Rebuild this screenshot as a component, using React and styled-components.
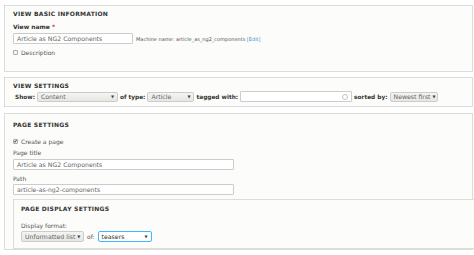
import React from 'react';
import styled, { createGlobalStyle } from 'styled-components';

const GlobalStyle = createGlobalStyle`
  html, body {
    margin: 0;
    padding: 0;
    background: #fff;
    overflow: hidden;
  }
  body {
    font-family: "DejaVu Sans", Verdana, sans-serif;
    color: #333;
    font-size: 6px;
  }
`;

const Page = styled.div`
  width: 474px;
  height: 255px;
  padding: 5px 1px 0 4px;
  box-sizing: border-box;
  overflow: hidden;
`;

const Fieldset = styled.div`
  border: 1px solid #dcdcd8;
  background: #fcfcfa;
  padding: ${(p) => p.$pad || '4px 8px 4px 8px'};
  margin-bottom: ${(p) => p.$gap || 0}px;
  margin-top: ${(p) => p.$top || 0}px;
  margin-right: ${(p) => p.$overflow || 0}px;
  box-sizing: border-box;
`;

const Legend = styled.div`
  font-weight: bold;
  font-size: 6px;
  line-height: 8px;
  letter-spacing: 0.25px;
  text-transform: uppercase;
  color: #333;
`;

const Label = styled.div`
  font-size: 6px;
  line-height: 8px;
  margin-top: ${(p) => p.$top || 0}px;
  font-weight: ${(p) => (p.$bold ? 'bold' : 'normal')};
  color: ${(p) => (p.$bold ? '#333' : '#555')};
  span {
    color: #e0262a;
  }
`;

const Row = styled.div`
  display: flex;
  align-items: center;
  gap: ${(p) => p.$gap || 3}px;
  margin-top: ${(p) => p.$top || 0}px;
  padding-left: ${(p) => p.$indent || 0}px;
`;

const TextInput = styled.div`
  width: ${(p) => p.$w}px;
  height: 11px;
  box-sizing: border-box;
  border: 1px solid #ccc;
  border-radius: 1px;
  background: #fff;
  font-size: 6.2px;
  line-height: 9px;
  padding: 0 3px;
  color: #666;
  margin-top: ${(p) => p.$top || 0}px;
  display: flex;
  align-items: center;
  justify-content: space-between;
  white-space: nowrap;
  flex-shrink: 0;
`;

const Throbber = styled.span`
  width: 4px;
  height: 4px;
  border: 1px solid #c4c4c4;
  border-radius: 50%;
`;

const Select = styled.div`
  width: ${(p) => p.$w}px;
  height: ${(p) => p.$h || 10}px;
  box-sizing: border-box;
  border: 1px solid ${(p) => (p.$focus ? '#40b6ff' : '#ccc')};
  border-radius: 2px;
  background: ${(p) => (p.$focus ? '#fff' : 'linear-gradient(#f4f4f2, #e6e6e3)')};
  color: ${(p) => (p.$focus ? '#333' : '#666')};
  font-size: 6.2px;
  line-height: 8px;
  padding: 0 3px 0 3px;
  display: flex;
  align-items: center;
  justify-content: space-between;
  white-space: nowrap;
  flex-shrink: 0;
  overflow: hidden;
`;

const Arrow = styled.span`
  font-size: 4px;
  color: #444;
  margin-left: 2px;
`;

const Inline = styled.span`
  font-size: ${(p) => (p.$bold ? 5.8 : 6)}px;
  font-weight: ${(p) => (p.$bold ? 'bold' : 'normal')};
  color: ${(p) => (p.$bold ? '#333' : '#555')};
  white-space: nowrap;
`;

const Small = styled.span`
  font-size: 5px;
  color: #555;
  white-space: nowrap;
  a {
    color: #3a8fd0;
    text-decoration: none;
  }
`;

const Check = styled.span`
  width: 5px;
  height: 5px;
  box-sizing: border-box;
  border: 1px solid #aaa;
  border-radius: 1px;
  background: #f6f6f6;
  display: inline-flex;
  align-items: center;
  justify-content: center;
  font-size: 5px;
  line-height: 5px;
  color: #333;
`;

function Dropdown({ w, h, focus, children }) {
  return (
    <Select $w={w} $h={h} $focus={focus}>
      <span>{children}</span>
      <Arrow>▼</Arrow>
    </Select>
  );
}

export default function App() {
  return (
    <>
      <GlobalStyle />
      <Page>
        <Fieldset $pad="4px 8px 15px 8px" $gap={5}>
          <Legend>View basic information</Legend>
          <Label $bold $top={5}>
            View name <span>*</span>
          </Label>
          <Row $top={2} $gap={3}>
            <TextInput $w={120}>Article as NG2 Components</TextInput>
            <Small>
              Machine name: article_as_ng2_components <a href="#">[Edit]</a>
            </Small>
          </Row>
          <Row $top={5} $gap={3}>
            <Check />
            <Inline>Description</Inline>
          </Row>
        </Fieldset>

        <Fieldset $pad="4px 8px 4px 8px" $gap={6}>
          <Legend>View settings</Legend>
          <Row $top={1} $gap={2} $indent={2}>
            <Inline $bold>Show:</Inline>
            <Dropdown w={81}>Content</Dropdown>
            <Inline $bold>of type:</Inline>
            <Dropdown w={47}>Article</Dropdown>
            <Inline $bold>tagged with:</Inline>
            <TextInput $w={112}>
              <span />
              <Throbber />
            </TextInput>
            <Inline $bold>sorted by:</Inline>
            <Dropdown w={48}>Newest first</Dropdown>
          </Row>
        </Fieldset>

        <Fieldset $pad="7px 8px 0 8px">
          <Legend>Page settings</Legend>
          <Row $top={9} $gap={3}>
            <Check>✔</Check>
            <Inline>Create a page</Inline>
          </Row>
          <Label $top={4}>Page title</Label>
          <TextInput $w={221} $top={2}>Article as NG2 Components</TextInput>
          <Label $top={5}>Path</Label>
          <TextInput $w={221} $top={1}>article-as-ng2-components</TextInput>
          <Fieldset $pad="5px 7px 6px 7px" $top={4} $overflow={-20}>
            <Legend>Page display settings</Legend>
            <Label $top={9}>Display format:</Label>
            <Row $top={1} $gap={3}>
              <Dropdown w={63} h={11}>Unformatted list</Dropdown>
              <Inline>of:</Inline>
              <Dropdown w={54} h={11} focus>teasers</Dropdown>
            </Row>
          </Fieldset>
        </Fieldset>
      </Page>
    </>
  );
}
